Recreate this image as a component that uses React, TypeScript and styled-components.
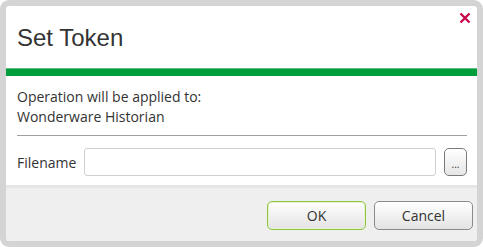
import styled, { createGlobalStyle } from 'styled-components';

const GlobalStyle = createGlobalStyle`
	html, body {
		margin: 0;
		padding: 0;
		background: #ffffff;
	}
	body {
		font-family: 'Open Sans', 'Noto Sans', sans-serif;
	}
`;

const App = () => {
	return (
		<>
			<GlobalStyle />
			<Frame>
				<Dialog>
					<Header>
						<Title>Set Token</Title>
						<CloseButton aria-label="Close">
							<svg width="12" height="12" viewBox="0 0 12 12">
								<path
									d="M1.5 1.5 L10.5 10.5 M10.5 1.5 L1.5 10.5"
									stroke="#c8084e"
									strokeWidth="2.4"
									strokeLinecap="butt"
								/>
							</svg>
						</CloseButton>
					</Header>
					<AccentBar />
					<Body>
						<Message>
							Operation will be applied to:
							<br />
							Wonderware Historian
						</Message>
						<Divider />
						<FieldRow>
							<Label>Filename</Label>
							<TextInput type="text" />
							<BrowseButton>...</BrowseButton>
						</FieldRow>
					</Body>
					<Footer>
						<ActionButton $primary>OK</ActionButton>
						<ActionButton>Cancel</ActionButton>
					</Footer>
				</Dialog>
			</Frame>
		</>
	);
};

export default App;

const Frame = styled.div`
	width: 483px;
	height: 247px;
	box-sizing: border-box;
	padding: 6px;
	background: #d4d4d4;
	border-radius: 9px;
	display: flex;
`;

const Dialog = styled.div`
	flex: 1;
	display: flex;
	flex-direction: column;
	background: #ffffff;
	border-radius: 3px;
	overflow: hidden;
`;

const Header = styled.div`
	position: relative;
	height: 62px;
	display: flex;
	align-items: center;
	padding: 0 11px;
	box-sizing: border-box;
`;

const Title = styled.h1`
	margin: 0;
	padding-top: 1px;
	font-family: 'Liberation Sans', Arial, sans-serif;
	font-weight: normal;
	font-size: 24px;
	color: #333333;
`;

const CloseButton = styled.button`
	position: absolute;
	top: 6px;
	right: 6px;
	width: 12px;
	height: 12px;
	padding: 0;
	border: none;
	background: none;
	display: flex;
	cursor: pointer;
`;

const AccentBar = styled.div`
	height: 7px;
	background: #009d3d;
	border-top: 1px solid #5fbf83;
`;

const Body = styled.div`
	flex: 1;
	padding: 11px 10px 0 11px;
	display: flex;
	flex-direction: column;
`;

const Message = styled.div`
	font-size: 14px;
	line-height: 20px;
	color: #333333;
`;

const Divider = styled.hr`
	margin: 8px 0 12px 0;
	border: none;
	border-top: 1px solid #a0a0a0;
`;

const FieldRow = styled.div`
	display: flex;
	align-items: center;
`;

const Label = styled.span`
	width: 67px;
	font-size: 14px;
	color: #333333;
`;

const TextInput = styled.input`
	flex: 1;
	height: 28px;
	box-sizing: border-box;
	border: 1px solid #cfcfcf;
	border-radius: 3px;
	background: #ffffff;
	outline: none;
	font-family: inherit;
	font-size: 13px;
	padding: 0 6px;
`;

const BrowseButton = styled.button`
	margin-left: 8px;
	width: 23px;
	height: 28px;
	padding: 0 0 4px 0;
	box-sizing: border-box;
	border: 1px solid #7a7a7a;
	border-radius: 5px;
	background: linear-gradient(#ffffff, #e6e6e6);
	font-family: inherit;
	font-size: 10px;
	color: #333333;
	display: flex;
	align-items: flex-end;
	justify-content: center;
`;

const Footer = styled.div`
	height: 56px;
	box-sizing: border-box;
	border-top: 3px solid #e6e6e6;
	background: #efefef;
	display: flex;
	justify-content: flex-end;
	align-items: flex-start;
	gap: 8px;
	padding: 13px 4px 0 0;
`;

const ActionButton = styled.button<{ $primary?: boolean }>`
	width: 99px;
	height: 29px;
	box-sizing: border-box;
	border: 1px solid ${(p) => (p.$primary ? '#8cc63f' : '#8a8a8a')};
	box-shadow: ${(p) => (p.$primary ? 'inset 0 0 0 1px #e4f2d0' : 'none')};
	border-radius: 5px;
	background: linear-gradient(#ffffff, #e3e3e3);
	font-family: inherit;
	font-size: 14px;
	color: #333333;
	cursor: pointer;
`;
